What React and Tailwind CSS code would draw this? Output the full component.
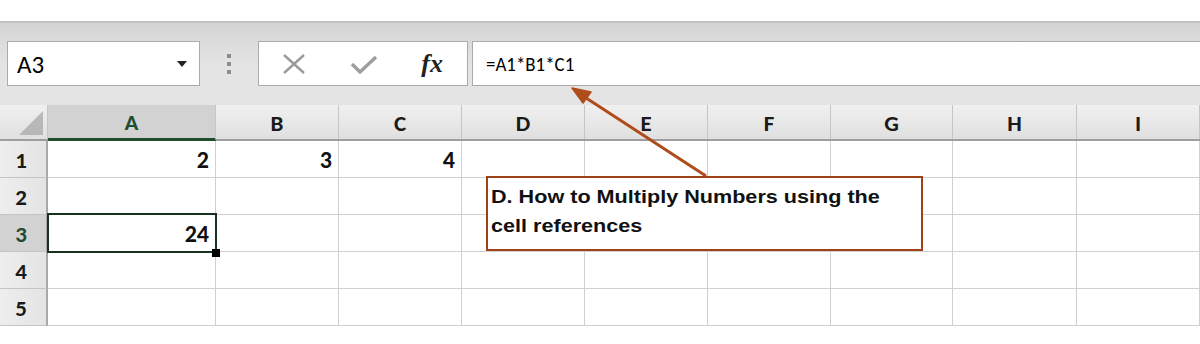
import React from "react";

const cols = [
  { l: "A", w: 168 },
  { l: "B", w: 123 },
  { l: "C", w: 123 },
  { l: "D", w: 123 },
  { l: "E", w: 123 },
  { l: "F", w: 123 },
  { l: "G", w: 122 },
  { l: "H", w: 124 },
  { l: "I", w: 123 },
];

const data = { "1A": "2", "1B": "3", "1C": "4", "3A": "24" };

const xl = { fontFamily: '"Carlito", "Liberation Sans Narrow", "Open Sans", sans-serif' };

export default function App() {
  return (
    <div className="relative w-[1200px] h-[344px] overflow-hidden bg-white" style={xl}>
      <div className="h-[21px] bg-white" />
      {/* toolbar */}
      <div className="h-[84px] border-t-2 border-[#c2c2c2] bg-gradient-to-b from-[#d4d4d4] via-[#e4e4e4] to-[#e4e4e4] flex items-start pt-[18px]">
        <div className="ml-[7px] w-[193px] h-[45px] bg-white border border-[#ababab] flex items-center justify-between pl-[9px] pr-[12px]">
          <span className="text-[25px] text-black leading-none pt-[2px]">A3</span>
          <svg width="10" height="6" viewBox="0 0 10 6"><path d="M0 0H10L5 6Z" fill="#222" /></svg>
        </div>
        <div className="w-[58px] h-[45px] flex flex-col items-center justify-center gap-[4px]">
          <span className="w-[4px] h-[4px] bg-[#8c8c8c]" />
          <span className="w-[4px] h-[4px] bg-[#8c8c8c]" />
          <span className="w-[4px] h-[4px] bg-[#8c8c8c]" />
        </div>
        <div className="w-[210px] h-[45px] bg-white border border-[#ababab] flex items-center pl-[23px] pr-[24px] justify-between">
          <svg width="24" height="20" viewBox="0 0 24 20">
            <path d="M2 1L22 19M22 1L2 19" stroke="#9a9a9a" strokeWidth="2.4" fill="none" />
          </svg>
          <svg width="28" height="22" viewBox="0 0 28 22" className="ml-[20px]">
            <path d="M2 11L10 19L26 4" stroke="#9e9e9e" strokeWidth="3.4" fill="none" strokeLinejoin="round" />
          </svg>
          <span className="ml-[20px] text-[26px] font-bold italic leading-none text-[#222]" style={{ fontFamily: '"Liberation Serif", "DejaVu Serif", serif' }}>fx</span>
        </div>
        <div className="ml-[4px] flex-1 h-[45px] bg-white border border-[#ababab] border-r-0 flex items-center pl-[13px]">
          <span className="inline-block origin-left scale-x-[0.9] text-[21px] text-black leading-none pt-[2px]">=A1*B1*C1</span>
        </div>
      </div>
      {/* sheet */}
      <div className="flex flex-col">
        <div className="flex h-[36px] bg-gradient-to-b from-[#f0f0f0] to-[#e0e0e0] border-b-2 border-[#9e9e9e]">
          <div className="w-[48px] relative border-r border-[#c6c6c6]">
            <svg width="48" height="36" viewBox="0 0 48 36" className="absolute left-0 top-0">
              <path d="M19 30H43V6Z" fill="#b8b8b8" />
            </svg>
          </div>
          {cols.map((c) => (
            <div
              key={c.l}
              style={{ width: c.w }}
              className={
                "flex items-center justify-center text-[23px] font-bold leading-none border-r border-[#c6c6c6] " +
                (c.l === "A" ? "bg-[#d2d2d2] text-[#1f4d33] border-b-[3px] border-b-[#1f4d2e] -mb-[2px]" : "text-[#1a1a1a]")
              }
            >
              <span className="pt-[2px]">{c.l}</span>
            </div>
          ))}
        </div>
        {[1, 2, 3, 4, 5].map((r) => (
          <div key={r} className="flex h-[37px]">
            <div
              className={
                "w-[48px] flex items-center justify-center text-[23px] font-bold leading-none border-r-2 border-r-[#a8a8a8] border-b border-b-[#c4c4c4] " +
                (r === 3 ? "bg-[#d2d2d2] text-[#1f4d33]" : "bg-gradient-to-r from-[#eeeeee] to-[#e4e4e4] text-[#1a1a1a]")
              }
            >
              <span className="pt-[2px] -ml-[4px]">{r}</span>
            </div>
            {cols.map((c) => {
              const v = data[r + c.l];
              const sel = r === 3 && c.l === "A";
              return (
                <div
                  key={c.l}
                  style={{ width: c.w }}
                  className={
                    "relative flex items-center justify-end pr-[6px] text-[24px] font-bold leading-none text-[#111] border-r border-b border-[#d0d0d0] " +
                    (sel ? "z-10" : "")
                  }
                >
                  {v && <span className="pt-[2px]">{v}</span>}
                  {sel && (
                    <>
                      <div className="absolute -left-[1px] -top-[2px] right-[-2px] bottom-[-2px] border-[2.5px] border-[#17301f]" />
                      <div className="absolute right-[-5px] bottom-[-6px] w-[8px] h-[8px] bg-black" />
                    </>
                  )}
                </div>
              );
            })}
          </div>
        ))}
      </div>
      {/* callout */}
      <div
        className="absolute left-[486px] top-[176px] w-[437px] h-[75px] border-2 border-[#9e4218] bg-white pl-[3px] pt-[5px] text-[18px] font-bold leading-[29px] text-[#111]"
        style={{ fontFamily: '"Liberation Sans", Arial, sans-serif' }}
      >
        <div className="origin-left scale-x-[1.2] whitespace-nowrap">D. How to Multiply Numbers using the</div>
        <div className="origin-left scale-x-[1.2] whitespace-nowrap">cell references</div>
      </div>
      <svg className="absolute left-0 top-0 pointer-events-none" width="1200" height="344" viewBox="0 0 1200 344">
        <line x1="706" y1="176" x2="580" y2="94" stroke="#b04c1c" strokeWidth="3" />
        <path d="M572 88L591 92L583 103Z" fill="#b04c1c" stroke="#b04c1c" strokeWidth="1.5" strokeLinejoin="round" />
      </svg>
    </div>
  );
}
